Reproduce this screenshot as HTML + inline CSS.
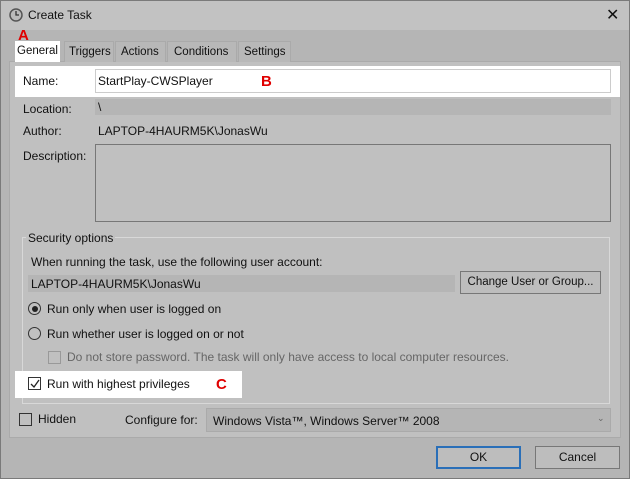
<!DOCTYPE html>
<html><head><style>
body{margin:0;width:630px;height:479px;overflow:hidden;background:#b5b5b5;font-family:"Liberation Sans",sans-serif;font-size:12px;color:#111;position:relative}
div,span{position:absolute;box-sizing:border-box}
.t{white-space:nowrap}
.cb{width:13px;height:13px;border:1px solid #333;background:#c0c0c0}
.rd{width:13px;height:13px;border:1px solid #333;border-radius:50%}
.btn{border:1px solid #777;background:#bdbdbd;text-align:center;line-height:20px}
.red{color:#e00000;font-weight:bold;font-size:15px}
</style></head><body>
<div style="left:0;top:0;width:630px;height:479px;border:1px solid #7a7a7a"></div>
<div style="left:1px;top:1px;width:628px;height:29px;background:#c2c2c2"></div>
<svg style="position:absolute;left:9px;top:8px" width="14" height="14"><circle cx="7" cy="7" r="6" fill="#bbb" stroke="#555" stroke-width="1.5"/><path d="M7 3V7H10" stroke="#333" fill="none" stroke-width="1.3"/></svg>
<span class="t" style="left:28px;top:8px;font-size:12px">Create Task</span>
<span class="t" style="left:606px;top:5px;font-size:16px">✕</span>
<span class="t red" style="left:18px;top:27px">A</span>
<div style="left:9px;top:61px;width:612px;height:377px;background:#c0c0c0;border:1px solid #aaa"></div>
<div style="left:15px;top:41px;width:45px;height:21px;background:#fff"></div>
<span class="t" style="left:17px;top:45px;font-size:11.5px">General</span>
<div style="left:64px;top:41px;width:50px;height:21px;border:1px solid #aaa;border-bottom:none;background:#b8b8b8"></div><span class="t" style="left:69px;top:46px;font-size:11.5px">Triggers</span>
<div style="left:115px;top:41px;width:51px;height:21px;border:1px solid #aaa;border-bottom:none;background:#b8b8b8"></div><span class="t" style="left:121px;top:46px;font-size:11.5px">Actions</span>
<div style="left:167px;top:41px;width:70px;height:21px;border:1px solid #aaa;border-bottom:none;background:#b8b8b8"></div><span class="t" style="left:174px;top:46px;font-size:11.5px">Conditions</span>
<div style="left:238px;top:41px;width:53px;height:21px;border:1px solid #aaa;border-bottom:none;background:#b8b8b8"></div><span class="t" style="left:244px;top:46px;font-size:11.5px">Settings</span>
<div style="left:15px;top:66px;width:605px;height:31px;background:#fff"></div>
<span class="t" style="left:23px;top:74px">Name:</span>
<div style="left:95px;top:69px;width:516px;height:24px;border:1px solid #ccc;background:#fff"></div>
<span class="t" style="left:98px;top:74px">StartPlay-CWSPlayer</span>
<span class="t red" style="left:261px;top:73px">B</span>
<span class="t" style="left:23px;top:102px">Location:</span>
<div style="left:95px;top:99px;width:516px;height:16px;background:#b5b5b5"></div>
<span class="t" style="left:98px;top:100px">\</span>
<span class="t" style="left:23px;top:124px">Author:</span>
<span class="t" style="left:98px;top:124px">LAPTOP-4HAURM5K\JonasWu</span>
<span class="t" style="left:23px;top:149px">Description:</span>
<div style="left:95px;top:144px;width:516px;height:78px;border:1px solid #777"></div>
<div style="left:22px;top:237px;width:588px;height:167px;border:1px solid #d8d8d8"></div>
<span class="t" style="left:26px;top:231px;background:#c0c0c0;padding:0 2px">Security options</span>
<span class="t" style="left:31px;top:255px">When running the task, use the following user account:</span>
<div style="left:28px;top:275px;width:427px;height:17px;background:#b5b5b5"></div>
<span class="t" style="left:31px;top:277px">LAPTOP-4HAURM5K\JonasWu</span>
<div class="btn" style="left:460px;top:271px;width:141px;height:23px;font-size:11.5px">Change User or Group...</div>
<div class="rd" style="left:28px;top:302px"><div style="left:2.5px;top:2.5px;width:6px;height:6px;border-radius:50%;background:#222"></div></div>
<span class="t" style="left:47px;top:302px">Run only when user is logged on</span>
<div class="rd" style="left:28px;top:327px"></div>
<span class="t" style="left:47px;top:327px">Run whether user is logged on or not</span>
<div class="cb" style="left:48px;top:351px;border-color:#999"></div>
<span class="t" style="left:67px;top:350px;color:#666">Do not store password.  The task will only have access to local computer resources.</span>
<div style="left:15px;top:371px;width:227px;height:27px;background:#fff"></div>
<div class="cb" style="left:28px;top:377px;background:#fff"><svg style="position:absolute;left:1px;top:1px" width="10" height="10"><path d="M1 5L4 8L9 1" stroke="#222" fill="none" stroke-width="1.3"/></svg></div>
<span class="t" style="left:47px;top:377px">Run with highest privileges</span>
<span class="t red" style="left:216px;top:376px">C</span>
<div class="cb" style="left:19px;top:413px"></div>
<span class="t" style="left:38px;top:412px">Hidden</span>
<span class="t" style="left:125px;top:413px">Configure for:</span>
<div style="left:206px;top:408px;width:405px;height:24px;background:#b5b5b5;border:1px solid #aaa"></div>
<span class="t" style="left:213px;top:414px">Windows Vista™, Windows Server™ 2008</span>
<span class="t" style="left:597px;top:413px;font-size:9px;color:#666">⌄</span>
<div class="btn" style="left:436px;top:446px;width:85px;height:23px;border:2px solid #2a6fb8;line-height:19px">OK</div>
<div class="btn" style="left:535px;top:446px;width:85px;height:23px">Cancel</div>
</body></html>
